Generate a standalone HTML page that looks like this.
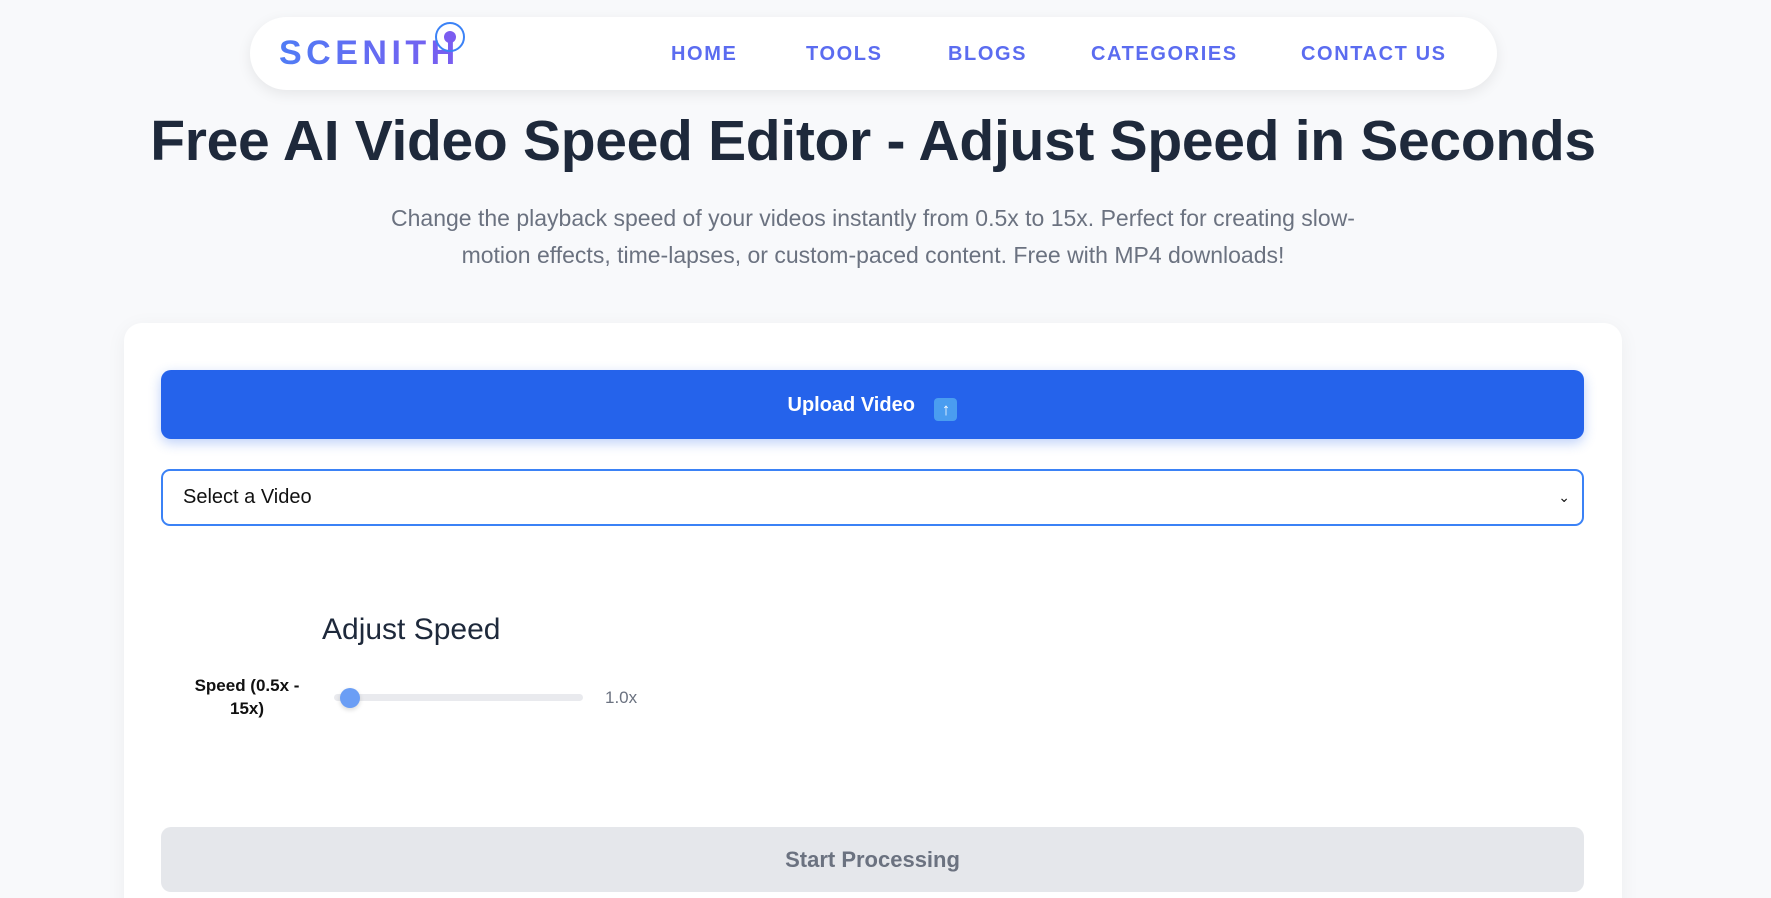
<!DOCTYPE html>
<html style="overflow:hidden;height:898px"><head><meta charset="utf-8"><style>
*{box-sizing:border-box;margin:0;padding:0}
body{width:1771px;height:898px;overflow:hidden;background:#f8f9fb;font-family:"Liberation Sans",sans-serif;position:relative}
.nav{position:absolute;left:250px;top:17px;width:1247px;height:73px;background:#fff;border-radius:40px;box-shadow:0 4px 14px rgba(0,0,0,.08)}
.logo{position:absolute;left:279px;top:34px;font-size:34px;font-weight:700;letter-spacing:4.5px;background:linear-gradient(90deg,#4f7cf5,#7b5cf0);-webkit-background-clip:text;color:transparent}
.dot{position:absolute;left:435px;top:22px;width:30px;height:30px;border:2.5px solid #3b82f6;border-radius:50%}
.dot:after{content:"";position:absolute;left:7px;top:7px;width:12px;height:12px;border-radius:50%;background:#7b5cf0}
.nl{position:absolute;top:43px;font-size:20px;color:#5b6cf0;letter-spacing:1.6px;font-weight:700}
h1{position:absolute;left:0;width:1746px;top:108px;text-align:center;font-size:57px;font-weight:700;color:#1e293b;letter-spacing:-0.3px}
.sub{position:absolute;left:368px;width:1010px;top:200px;text-align:center;font-size:23px;line-height:37px;color:#6b7280}
.card{position:absolute;left:124px;top:323px;width:1498px;height:600px;background:#fff;border-radius:18px;box-shadow:0 4px 20px rgba(0,0,0,.05)}
.up{position:absolute;left:161px;top:370px;width:1423px;height:69px;background:#2563eb;border-radius:10px;color:#fff;font-weight:700;font-size:20px;text-align:center;line-height:71px;box-shadow:0 4px 12px rgba(37,99,235,.3)}
.arr{display:inline-block;width:23px;height:23px;background:#4a9df0;border-radius:4px;vertical-align:-4px;margin-left:14px;font-size:17px;line-height:23px}
.sel{position:absolute;left:161px;top:469px;width:1423px;height:57px;border:2px solid #3b82f6;border-radius:9px;font-size:20px;line-height:53px;padding-left:20px;color:#111}
.sel span{position:absolute;right:12px;top:0;font-size:14px}
.as{position:absolute;left:322px;top:613px;font-size:30px;color:#1e293b}
.lab{position:absolute;left:185px;width:124px;top:674px;text-align:center;font-size:17px;line-height:23px;font-weight:700;color:#111}
.tr{position:absolute;left:334px;top:694px;width:249px;height:7px;background:#e9eaee;border-radius:4px}
.th{position:absolute;left:340px;top:688px;width:20px;height:20px;border-radius:50%;background:#6b9ef5;box-shadow:0 2px 5px rgba(0,0,0,.15)}
.val{position:absolute;left:605px;top:688px;font-size:17px;color:#6b7280}
.sp{position:absolute;left:161px;top:827px;width:1423px;height:65px;background:#e5e7eb;border-radius:10px;text-align:center;line-height:65px;font-size:22px;font-weight:700;color:#6b7280}
</style></head><body>
<div class="nav"></div>
<div class="logo">SCENITH</div><div class="dot"></div>
<div class="nl" style="left:671px">HOME</div>
<div class="nl" style="left:806px">TOOLS</div>
<div class="nl" style="left:948px">BLOGS</div>
<div class="nl" style="left:1091px">CATEGORIES</div>
<div class="nl" style="left:1301px">CONTACT US</div>
<h1>Free AI Video Speed Editor - Adjust Speed in Seconds</h1>
<div class="sub">Change the playback speed of your videos instantly from 0.5x to 15x. Perfect for creating slow-motion effects, time-lapses, or custom-paced content. Free with MP4 downloads!</div>
<div class="card"></div>
<div class="up">Upload Video <span class="arr">↑</span></div>
<div class="sel">Select a Video<span>⌄</span></div>
<div class="as">Adjust Speed</div>
<div class="lab">Speed (0.5x - 15x)</div>
<div class="tr"></div><div class="th"></div>
<div class="val">1.0x</div>
<div class="sp">Start Processing</div>
</body></html>
